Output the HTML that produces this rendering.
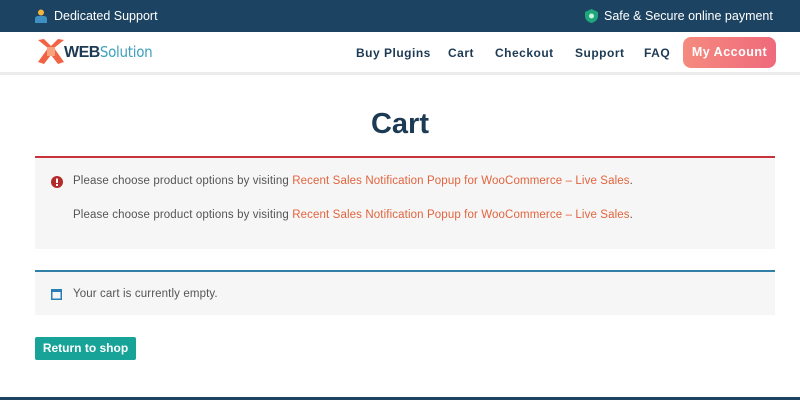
<!DOCTYPE html>
<html><head><style>
*{margin:0;padding:0;box-sizing:border-box}
body{width:800px;height:400px;overflow:hidden;background:#fff;font-family:"Liberation Sans",sans-serif;position:relative}
.top{position:absolute;left:0;top:0;width:800px;height:32px;background:#1c4361;color:#fff;font-size:12.5px}
.hdr{position:absolute;top:32px;left:0;width:800px;height:43px;background:#fff;border-bottom:3px solid #ececec}
.nav a{position:absolute;top:14px;font-size:12px;font-weight:bold;color:#1c3a54;letter-spacing:0.5px;text-decoration:none;white-space:nowrap}
.acct{position:absolute;left:683px;top:5px;width:93px;height:31px;border-radius:8px;background:linear-gradient(90deg,#f58a7e,#ef6a7c);color:#fff;font-weight:bold;font-size:12.5px;letter-spacing:0.5px;text-align:center;line-height:31px}
h1{position:absolute;top:108px;width:800px;text-align:center;font-size:29px;color:#1c3a54;font-weight:bold}
.box{position:absolute;left:35px;width:740px;background:#f6f6f6;font-size:11.5px;color:#555;letter-spacing:0.12px}
.box span{color:#e2643e}
.btn{position:absolute;left:35px;top:337px;width:101px;height:23px;background:#17a398;color:#fff;font-weight:bold;font-size:12px;text-align:center;line-height:23px;border-radius:2px}
</style></head><body>
<div class="top">
<svg style="position:absolute;left:35px;top:9px" width="12" height="14" viewBox="0 0 12 14"><circle cx="6" cy="3.5" r="3" fill="#f2b43c"/><path d="M0 14 V10 Q0 7 3 7 H9 Q12 7 12 10 V14Z" fill="#3d8fc4"/></svg>
<div style="position:absolute;left:54px;top:9px">Dedicated Support</div>
<svg style="position:absolute;left:585px;top:9px" width="13" height="14" viewBox="0 0 13 14"><path d="M6.5 0 L13 3 V7 Q13 12 6.5 14 Q0 12 0 7 V3Z" fill="#1fa67a"/><circle cx="6.5" cy="7" r="2.5" fill="#c9f5e0"/></svg>
<div style="position:absolute;left:604px;top:9px">Safe &amp; Secure online payment</div>
</div>
<div class="hdr">
<svg style="position:absolute;left:36px;top:6px" width="30" height="28" viewBox="0 0 30 28"><path d="M2 2 L12 10 L2 24 L8 26 L15 17 L22 26 L28 24 L18 10 L28 2 L22 1 L15 8 L8 1Z" fill="#ee6444"/><rect x="11" y="9" width="8" height="9" fill="#f7a37e"/></svg>
<div style="position:absolute;left:64px;top:11px;font-size:16px;font-weight:bold;color:#1c3a54;letter-spacing:-0.5px">WEB<span style="color:#3fa0bd;font-weight:normal;font-family:'DejaVu Sans Condensed','Liberation Sans Narrow',sans-serif;font-size:15px;letter-spacing:-0.3px">Solution</span></div>
<div class="nav"><a style="left:356px">Buy Plugins</a><a style="left:448px">Cart</a><a style="left:495px">Checkout</a><a style="left:575px">Support</a><a style="left:644px">FAQ</a></div>
<div class="acct">My Account</div>
</div>
<h1>Cart</h1>
<div class="box" style="top:156px;height:93px;border-top:2px solid #c8333b">
<svg style="position:absolute;left:16px;top:18px" width="12" height="12"><circle cx="6" cy="6" r="6" fill="#b52a2a"/><rect x="5" y="2.5" width="2" height="4.5" fill="#fff"/><rect x="5" y="8" width="2" height="2" fill="#fff"/></svg>
<div style="position:absolute;left:38px;top:17px">Please choose product options by visiting <span>Recent Sales Notification Popup for WooCommerce – Live Sales</span>.</div>
<div style="position:absolute;left:38px;top:51px">Please choose product options by visiting <span>Recent Sales Notification Popup for WooCommerce – Live Sales</span>.</div>
</div>
<div class="box" style="top:270px;height:45px;border-top:2px solid #2f7fa6">
<svg style="position:absolute;left:16px;top:17px" width="11" height="11"><rect x="0.75" y="0.75" width="9.5" height="9.5" fill="none" stroke="#2a7db5" stroke-width="1.5"/><rect x="0" y="0" width="11" height="3" fill="#2a7db5"/></svg>
<div style="position:absolute;left:38px;top:16px">Your cart is currently empty.</div>
</div>
<div class="btn">Return to shop</div>
<div style="position:absolute;left:0;top:397px;width:800px;height:3px;background:#1c4361"></div>
</body></html>
